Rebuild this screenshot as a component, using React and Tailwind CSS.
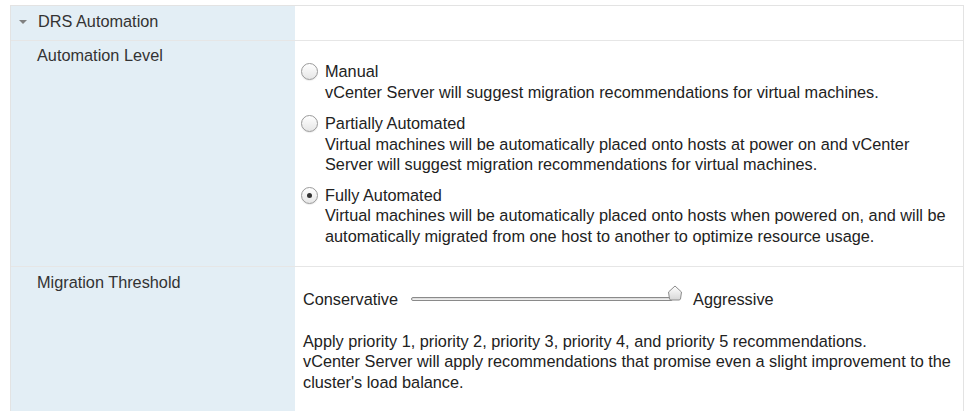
import React from "react";

function Radio({ checked }) {
  return (
    <span className="relative mt-[2px] flex h-[17px] w-[17px] shrink-0 items-center justify-center rounded-full border border-[#9a9a9a] bg-gradient-to-b from-[#ffffff] to-[#e6e6e6] shadow-[0_1px_1px_rgba(0,0,0,0.08)]">
      {checked && <span className="h-[5px] w-[5px] rounded-full bg-[#333]" />}
    </span>
  );
}

function Option({ checked, title, desc, className = "" }) {
  return (
    <div className={"flex items-start gap-[7px] " + className}>
      <Radio checked={checked} />
      <div>
        <div>{title}</div>
        {desc.map((d, i) => (
          <div key={i}>{d}</div>
        ))}
      </div>
    </div>
  );
}

export default function App() {
  return (
    <div
      className="min-h-[411px] bg-white pl-[10px] pt-[5px] text-[16.3px] leading-[20.5px] text-[#222]"
      style={{ fontFamily: '"Liberation Sans", Arial, sans-serif' }}
    >
      <div className="w-[954px] border-l border-r border-t border-[#e3e3e3]">
        {/* header */}
        <div className="flex h-[35px] border-b border-[#e6e6e6]">
          <div className="flex w-[284px] items-start bg-[#e3eef5] pl-[8px] pt-[5px] text-[#333]">
            <svg width="9" height="20" viewBox="0 0 9 20" className="mr-[10px]">
              <path d="M0 9 L8 9 L4 13 Z" fill="#808080" />
            </svg>
            <span>DRS Automation</span>
          </div>
          <div className="flex-1" />
        </div>
        {/* automation level */}
        <div className="flex border-b border-[#e6e6e6]">
          <div className="w-[284px] bg-[#e3eef5] pl-[26px] pt-[4px] text-[#333]">Automation Level</div>
          <div className="flex-1 pb-[20px] pl-[6px] pt-[20px]">
            <Option
              title="Manual"
              desc={["vCenter Server will suggest migration recommendations for virtual machines."]}
            />
            <Option
              className="mt-[11px]"
              title="Partially Automated"
              desc={[
                "Virtual machines will be automatically placed onto hosts at power on and vCenter",
                "Server will suggest migration recommendations for virtual machines.",
              ]}
            />
            <Option
              className="mt-[10px]"
              checked
              title="Fully Automated"
              desc={[
                "Virtual machines will be automatically placed onto hosts when powered on, and will be",
                "automatically migrated from one host to another to optimize resource usage.",
              ]}
            />
          </div>
        </div>
        {/* migration threshold */}
        <div className="flex min-h-[150px]">
          <div className="w-[284px] bg-[#e3eef5] pl-[26px] pt-[5px] text-[#333]">Migration Threshold</div>
          <div className="flex-1 pl-[8px] pt-[22px]">
            <div className="flex items-center">
              <span>Conservative</span>
              <div className="relative ml-[13px] flex h-[20px] w-[272px] items-center">
                <div className="h-[4px] w-[262px] rounded-full border border-[#8a8a8a] bg-gradient-to-b from-[#d8d8d8] to-[#f4f4f4]" />
                <svg width="18" height="16" viewBox="0 0 18 16" className="absolute left-[255px] top-[-4px]">
                  <defs>
                    <linearGradient id="tg" x1="0" y1="0" x2="0" y2="1">
                      <stop offset="0" stopColor="#ffffff" />
                      <stop offset="1" stopColor="#d6d6d6" />
                    </linearGradient>
                  </defs>
                  <path d="M9 1 L15.5 7 L14.5 14 Q14 15 13 15 L5 15 Q4 15 3.5 14 L2.5 7 Z" fill="url(#tg)" stroke="#8c8c8c" strokeWidth="1" strokeLinejoin="round" />
                </svg>
              </div>
              <span className="ml-[10px]">Aggressive</span>
            </div>
            <div className="mt-[21px]">
              <div>Apply priority 1, priority 2, priority 3, priority 4, and priority 5 recommendations.</div>
              <div>vCenter Server will apply recommendations that promise even a slight improvement to the</div>
              <div>cluster's load balance.</div>
            </div>
          </div>
        </div>
      </div>
    </div>
  );
}
